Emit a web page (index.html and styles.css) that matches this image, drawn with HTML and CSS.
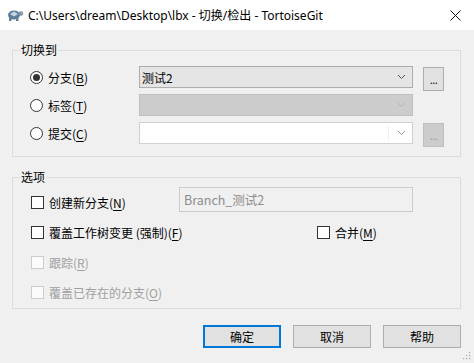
FILE: index.html
```html
<!DOCTYPE html>
<html lang="zh-CN">
<head>
<meta charset="utf-8">
<title>切换/检出 - TortoiseGit</title>
<link rel="stylesheet" href="styles.css">
</head>
<body>
<div class="window">
  <div class="titlebar">
    <svg class="app-icon" viewBox="0 0 17 14">
      <ellipse cx="7" cy="7" rx="6" ry="4.5" fill="#5b7d9e"/>
      <path d="M3 6 L7 3.5 L11 6 L7 8.5 Z" fill="#c9d6e2"/>
      <circle cx="14" cy="5.5" r="2.3" fill="#7d8f9f"/>
      <rect x="2" y="10" width="2.5" height="3" fill="#6d7f8f"/>
      <rect x="9" y="10" width="2.5" height="3" fill="#6d7f8f"/>
      <circle cx="14.8" cy="5" r="0.6" fill="#fff"/>
    </svg>
    <span class="title">C:\Users\dream\Desktop\lbx - 切换/检出 - TortoiseGit</span>
    <svg class="close" viewBox="0 0 11 11"><path d="M0.5 0.5 L10.5 10.5 M10.5 0.5 L0.5 10.5" stroke="#111" stroke-width="1" fill="none"/></svg>
  </div>
  <div class="content">
    <fieldset class="group group-switch">
      <legend>切换到</legend>
      <div class="switch-grid">
        <label class="opt"><span class="radio checked"></span><span>分支(<u>B</u>)</span></label>
        <div class="combo">
          <span class="combo-text">测试2</span>
          <svg class="chev" viewBox="0 0 9 6"><path d="M1 1 L4.5 4.5 L8 1" stroke="#555" fill="none"/></svg>
        </div>
        <div class="dots">...</div>

        <label class="opt"><span class="radio"></span><span>标签(<u>T</u>)</span></label>
        <div class="combo disabled">
          <span class="combo-text"></span>
          <svg class="chev" viewBox="0 0 9 6"><path d="M1 1 L4.5 4.5 L8 1" stroke="#b3b3b3" fill="none"/></svg>
        </div>
        <div class="spacer"></div>

        <label class="opt"><span class="radio"></span><span>提交(<u>C</u>)</span></label>
        <div class="combo editable">
          <span class="edit"></span>
          <svg class="chev" viewBox="0 0 9 6"><path d="M1 1 L4.5 4.5 L8 1" stroke="#9a9a9a" fill="none"/></svg>
        </div>
        <div class="dots disabled">...</div>
      </div>
    </fieldset>

    <fieldset class="group group-options">
      <legend>选项</legend>
      <div class="options-grid">
        <label class="opt"><span class="check"></span><span>创建新分支(<u>N</u>)</span></label>
        <div class="textbox">Branch_测试2</div>

        <label class="opt"><span class="check"></span><span>覆盖工作树变更 (强制)(<u>F</u>)</span></label>
        <label class="opt merge"><span class="check"></span><span>合并(<u>M</u>)</span></label>

        <label class="opt disabled full"><span class="check"></span><span>跟踪(<u>R</u>)</span></label>

        <label class="opt disabled full"><span class="check"></span><span>覆盖已存在的分支(<u>O</u>)</span></label>
      </div>
    </fieldset>

    <div class="buttons">
      <div class="btn default">确定</div>
      <div class="btn">取消</div>
      <div class="btn">帮助</div>
    </div>
  </div>
  <svg class="grip" viewBox="0 0 9 9">
    <rect x="7" y="1" width="1.2" height="1.2" fill="#a8a8a8"/>
    <rect x="4" y="4" width="1.2" height="1.2" fill="#a8a8a8"/>
    <rect x="7" y="4" width="1.2" height="1.2" fill="#a8a8a8"/>
    <rect x="1" y="7" width="1.2" height="1.2" fill="#a8a8a8"/>
    <rect x="4" y="7" width="1.2" height="1.2" fill="#a8a8a8"/>
    <rect x="7" y="7" width="1.2" height="1.2" fill="#a8a8a8"/>
  </svg>
</div>
</body>
</html>
```

FILE: styles.css
```css
* { box-sizing: border-box; }
html, body { margin: 0; padding: 0; }
body {
  width: 474px;
  height: 363px;
  overflow: hidden;
  background: #f0f0f0;
  font-family: "Noto Sans CJK SC", "Noto Sans", sans-serif;
  font-size: 12px;
  color: #000;
}
.window {
  position: relative;
  width: 474px;
  height: 363px;
  display: flex;
  flex-direction: column;
}
.titlebar {
  height: 30px;
  background: #fff;
  display: flex;
  align-items: center;
  padding-left: 7px;
}
.app-icon { width: 17px; height: 14px; margin-right: 4px; }
.title {
  flex: 1;
  font-family: "Noto Sans", "Noto Sans CJK SC", sans-serif;
  font-size: 12px;
  white-space: nowrap;
}
.close { width: 11px; height: 11px; margin-right: 13px; }

.content {
  flex: 1;
  padding: 12px 13px 0 12px;
  display: flex;
  flex-direction: column;
}
.group {
  margin: 0;
  padding: 0 0 0 7px;
  border: 1px solid #dcdcdc;
  min-width: 0;
}
.group legend {
  padding: 0 1px;
  line-height: 16px;
}
.group-options { margin-top: 12px; }

.switch-grid {
  display: grid;
  grid-template-columns: 99px 274px 21px;
  grid-template-rows: 24px 24px 24px;
  column-gap: 10px;
  row-gap: 4px;
  margin: 8px 0 10px 10px;
}
.opt {
  display: flex;
  align-items: center;
  gap: 5px;
  height: 22px;
  white-space: nowrap;
}
.opt u { text-decoration-thickness: 1px; text-underline-offset: 2px; }
.radio {
  width: 13px;
  height: 13px;
  border: 1px solid #333;
  border-radius: 50%;
  background: #fff;
  display: flex;
  align-items: center;
  justify-content: center;
  flex: none;
}
.radio.checked::after {
  content: "";
  width: 7px;
  height: 7px;
  border-radius: 50%;
  background: #333;
}
.combo {
  height: 22px;
  border: 1px solid #adadad;
  background: #e5e5e5;
  display: flex;
  align-items: center;
  padding-left: 2px;
}
.combo-text { flex: 1; }
.chev { width: 9px; height: 6px; margin-right: 6px; }
.combo.disabled { background: #cccccc; border-color: #bfbfbf; }
.combo.editable { background: #fff; border-color: #d0d0d0; padding: 2px 0 2px 2px; }
.combo.editable .edit {
  flex: 1;
  align-self: stretch;
  margin-right: 8px;
  background: #fff;
  border-right: 1px solid #f0f0f0;
}
.dots {
  width: 21px;
  height: 24px;
  margin-top: 1px;
  border: 1px solid #adadad;
  background: #e1e1e1;
  display: flex;
  align-items: center;
  justify-content: center;
  font-size: 11px;
  letter-spacing: -0.5px;
  color: #222;
}
.dots.disabled { background: #cccccc; border-color: #bfbfbf; color: #a0a0a0; }

.options-grid {
  display: grid;
  grid-template-columns: 148px 234px;
  grid-auto-rows: 30px;
  margin: 2px 0 1px 11px;
}
.options-grid .opt { height: 30px; padding-top: 1px; }
.check {
  width: 13px;
  height: 13px;
  border: 1px solid #333;
  background: #fff;
  flex: none;
}
.textbox {
  height: 25px;
  border: 1px solid #cccccc;
  background: #f0f0f0;
  color: #8c8c8c;
  font-size: 12.5px;
  padding-left: 4px;
  display: flex;
  align-items: center;
}
.merge { padding-left: 138px; }
.full { grid-column: 1 / 3; }
.opt.disabled { color: #a0a0a0; }
.opt.disabled .check { border-color: #cccccc; background: #fbfbfb; }

.buttons {
  margin-top: 16px;
  display: flex;
  justify-content: flex-end;
  gap: 12px;
}
.btn {
  width: 78px;
  height: 23px;
  border: 1px solid #adadad;
  background: #e1e1e1;
  display: flex;
  align-items: center;
  justify-content: center;
}
.btn.default { border: 2px solid #0078d7; }

.grip {
  position: absolute;
  right: 3px;
  bottom: 3px;
  width: 9px;
  height: 9px;
}
```
